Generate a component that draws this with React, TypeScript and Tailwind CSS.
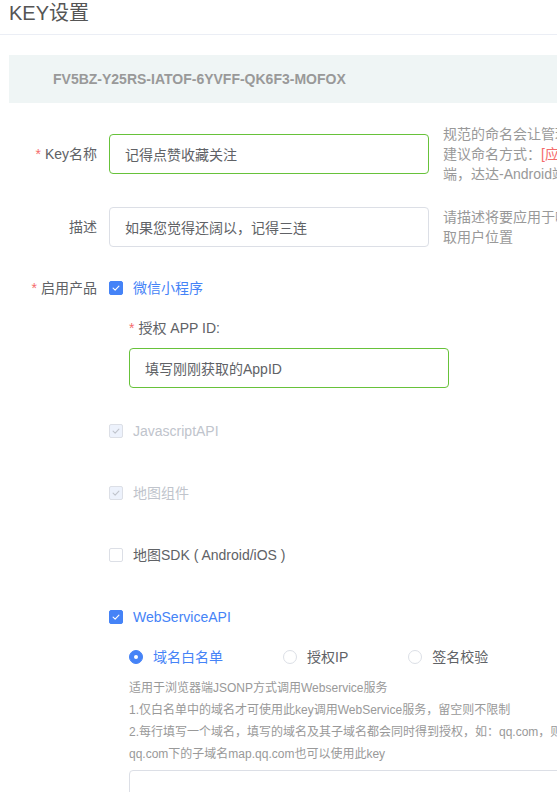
import { useState } from 'react';

const BLUE = '#4583f7';

function CheckIcon({ color }: { color: string }) {
  return (
    <svg viewBox="0 0 14 14" className="h-[14px] w-[14px]">
      <path d="M3.6 7.2 L6 9.4 L10.4 4.8" fill="none" stroke={color} strokeWidth="1.3" strokeLinecap="round" strokeLinejoin="round" />
    </svg>
  );
}

function Checkbox({ label, checked, disabled }: { label: string; checked?: boolean; disabled?: boolean }) {
  let box = 'border-[#dcdfe6] bg-white';
  if (checked && !disabled) box = 'border-[#4583f7] bg-[#4583f7]';
  if (disabled) box = 'border-[#dcdfe6] bg-[#edf2fc]';
  const text = disabled ? 'text-[#c0c4cc]' : checked ? 'text-[#4583f7]' : 'text-[#606266]';
  return (
    <label className="flex h-10 items-center">
      <span className={`flex h-[14px] w-[14px] items-center justify-center rounded-[2px] border ${box}`}>
        {checked && <CheckIcon color={disabled ? '#c0c4cc' : '#ffffff'} />}
      </span>
      <span className={`pl-[10px] text-sm ${text}`}>{label}</span>
    </label>
  );
}

function Radio({ label, checked }: { label: string; checked?: boolean }) {
  return (
    <label className="flex items-center">
      <span
        className={`flex h-[14px] w-[14px] items-center justify-center rounded-full border ${
          checked ? 'border-[#4583f7] bg-[#4583f7]' : 'border-[#dcdfe6] bg-white'
        }`}
      >
        {checked && <span className="h-1 w-1 rounded-full bg-white" />}
      </span>
      <span className={`pl-[10px] text-sm ${checked ? 'text-[#4583f7]' : 'text-[#606266]'}`}>{label}</span>
    </label>
  );
}

function Star() {
  return <span className="mr-1 text-[#f56c6c]">*</span>;
}

export default function App() {
  const [name, setName] = useState('记得点赞收藏关注');
  const [desc, setDesc] = useState('如果您觉得还阔以，记得三连');
  const [appId, setAppId] = useState('填写刚刚获取的AppID');

  return (
    <div
      className="h-[792px] w-[557px] overflow-hidden bg-white font-['Liberation_Sans','Noto_Sans_CJK_SC',sans-serif] text-[#606266]"
      data-color={BLUE}
    >
      <div className="h-[35px] border-b border-[#ebeef5] pl-[9px] text-[20px] leading-[26px] text-[#555]">KEY设置</div>

      <div className="ml-[9px] mt-5 h-12 w-[620px] bg-[#eff5f5] pl-[44px] text-sm font-bold leading-[48px] text-[#999]">
        FV5BZ-Y25RS-IATOF-6YVFF-QK6F3-MOFOX
      </div>

      <div className="mt-[21px]">
        <div className="flex items-center">
          <div className="w-[109px] shrink-0 pr-3 text-right text-sm">
            <Star />
            Key名称
          </div>
          <input
            value={name}
            onChange={(e) => setName(e.target.value)}
            className="h-10 w-[320px] shrink-0 rounded border border-[#67c23a] px-[15px] text-sm text-[#606266] outline-none"
          />
          <div className="ml-[14px] whitespace-nowrap text-sm leading-5 text-[#999]">
            <div>规范的命名会让管理更方便</div>
            <div>
              建议命名方式：<span className="text-[#f56c6c]">[应用名称]-[应用平台]</span>，例如：达达-iOS
            </div>
            <div>端，达达-Android端</div>
          </div>
        </div>

        <div className="mt-[23px] flex items-center">
          <div className="w-[109px] shrink-0 pr-3 text-right text-sm">描述</div>
          <input
            value={desc}
            onChange={(e) => setDesc(e.target.value)}
            className="h-10 w-[320px] shrink-0 rounded border border-[#dcdfe6] px-[15px] text-sm text-[#606266] outline-none"
          />
          <div className="ml-[14px] whitespace-nowrap text-sm leading-5 text-[#999]">
            <div>请描述将要应用于哪个场景，如：用于获</div>
            <div>取用户位置</div>
          </div>
        </div>

        <div className="mt-[21px] flex">
          <div className="w-[109px] shrink-0 pr-3 text-right text-sm leading-10">
            <Star />
            启用产品
          </div>
          <div className="flex-1">
            <Checkbox label="微信小程序" checked />
            <div className="pl-5">
              <div className="flex h-10 items-center text-sm">
                <Star />
                授权 APP ID:
              </div>
              <input
                value={appId}
                onChange={(e) => setAppId(e.target.value)}
                autoFocus
                className="h-10 w-[320px] rounded border border-[#67c23a] px-[15px] text-sm text-[#606266] caret-[#333] outline-none"
              />
            </div>
            <div className="mt-[23px]">
              <Checkbox label="JavascriptAPI" checked disabled />
            </div>
            <div className="mt-[22px]">
              <Checkbox label="地图组件" checked disabled />
            </div>
            <div className="mt-[22px]">
              <Checkbox label="地图SDK ( Android/iOS )" />
            </div>
            <div className="mt-[22px]">
              <Checkbox label="WebServiceAPI" checked />
            </div>
            <div className="pl-5">
              <div className="flex h-10 items-center gap-[60px] whitespace-nowrap">
                <Radio label="域名白名单" checked />
                <Radio label="授权IP" />
                <Radio label="签名校验" />
              </div>
              <div className="whitespace-nowrap text-xs leading-[22px] text-[#999]">
                <div>适用于浏览器端JSONP方式调用Webservice服务</div>
                <div>1.仅白名单中的域名才可使用此key调用WebService服务，留空则不限制</div>
                <div>2.每行填写一个域名，填写的域名及其子域名都会同时得到授权，如：qq.com，则</div>
                <div>qq.com下的子域名map.qq.com也可以使用此key</div>
              </div>
              <textarea className="mt-[5px] block h-[100px] w-[600px] resize-none rounded border border-[#dcdfe6] outline-none" />
            </div>
          </div>
        </div>
      </div>
    </div>
  );
}
